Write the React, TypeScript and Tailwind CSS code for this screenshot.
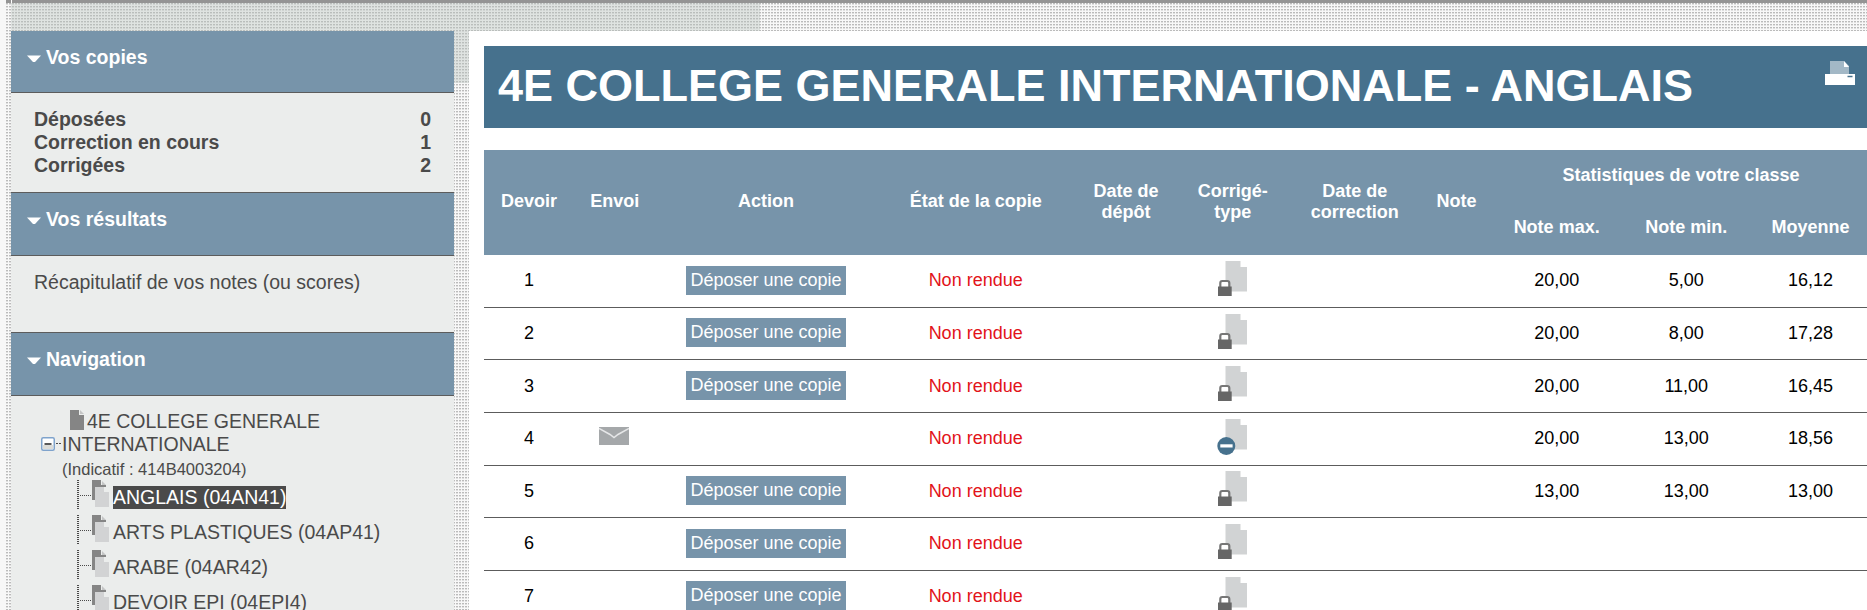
import clsx from "clsx";

type Devoir = {
  num: number;
  envoi?: boolean;
  corrige: "locked" | "forbidden";
  max?: string;
  min?: string;
  moyenne?: string;
};

const devoirs: Devoir[] = [
  { num: 1, corrige: "locked", max: "20,00", min: "5,00", moyenne: "16,12" },
  { num: 2, corrige: "locked", max: "20,00", min: "8,00", moyenne: "17,28" },
  { num: 3, corrige: "locked", max: "20,00", min: "11,00", moyenne: "16,45" },
  { num: 4, envoi: true, corrige: "forbidden", max: "20,00", min: "13,00", moyenne: "18,56" },
  { num: 5, corrige: "locked", max: "13,00", min: "13,00", moyenne: "13,00" },
  { num: 6, corrige: "locked" },
  { num: 7, corrige: "locked" },
];

const copies = [
  { label: "Déposées", count: 0 },
  { label: "Correction en cours", count: 1 },
  { label: "Corrigées", count: 2 },
];

const matieres = ["ANGLAIS (04AN41)", "ARTS PLASTIQUES (04AP41)", "ARABE (04AR42)", "DEVOIR EPI (04EPI4)"];

const columns =
  "grid grid-cols-[90px_81.4px_221.2px_198.2px_102.4px_111px_133px_70.8px_129.4px_129.8px_118.8px] w-[1386px] items-center justify-items-center";

function PanelTitle({ children, className }: { children: string; className?: string }) {
  return (
    <h2
      className={clsx(
        "flex items-start gap-[5px] border-b border-[#5c5c5c] bg-[#7794aa] pl-4 text-[19.5px] leading-[23px] font-bold text-white",
        className
      )}
    >
      <svg width="14" height="8" viewBox="0 0 14 8" className="mt-[9px]">
        <path d="M0 0.5h14L8 7H6z" fill="#fff" />
      </svg>
      {children}
    </h2>
  );
}

function SubjectIcon() {
  return (
    <svg width="32" height="29" viewBox="0 0 32 29" className="shrink-0">
      <path d="M1 0v29" stroke="#4a4a4a" strokeWidth="2" strokeDasharray="1 1" />
      <path d="M3 15.5h11" stroke="#4a4a4a" strokeDasharray="1 1" />
      <path d="M15 0h9v5h5v2H19v13h-4z" fill="#858585" />
      <path d="M18 7h9v5h5v15H18z" fill="#d2d3d4" />
      <path d="M25 1l4 4h-4z" fill="#c4c5c5" />
    </svg>
  );
}

function CorrigeIcon({ type }: { type: Devoir["corrige"] }) {
  return (
    <svg width="30" height="35" viewBox="0 0 30 35" className="mb-[5px] overflow-visible">
      <path d="M7.5 0h15v6h6.5v24.5H7.5z" fill="#d1d3d4" />
      {type === "locked" ? (
        <>
          <path d="M2.3 26v-4q0-2 2-2h5q2 0 2 2v4" fill="#fff" stroke="#777" strokeWidth="2.2" />
          <path d="M0 25.5h13.7V35H0z" fill="#666" />
        </>
      ) : (
        <>
          <circle cx="8.3" cy="27" r="9" fill="#46718d" />
          <path d="M2.3 25.3h12.3v3.2H2.3z" fill="#fff" />
        </>
      )}
    </svg>
  );
}

function Sidebar() {
  return (
    <aside className="w-[443px] shrink-0 bg-[#ebedec] text-[19.5px] leading-[23px] text-[#4a4a4a]">
      <PanelTitle className="h-[62px] pt-[15px]">Vos copies</PanelTitle>
      <ul className="h-[99px] pt-[15px] pr-[23px] pl-[23px] font-bold">
        {copies.map((c) => (
          <li key={c.label} className="flex justify-between">
            <span>{c.label}</span>
            <span>{c.count}</span>
          </li>
        ))}
      </ul>

      <PanelTitle className="h-[64px] border-t pt-[15px]">Vos résultats</PanelTitle>
      <p className="h-[76px] pt-[15px] pl-[23px]">Récapitulatif de vos notes (ou scores)</p>

      <PanelTitle className="h-[64px] border-t pt-[15px]">Navigation</PanelTitle>
      <div className="flex pt-[14px] pl-[30px]">
        <svg width="21" height="16" viewBox="0 0 21 16" className="mt-[27px] shrink-0">
          <rect x="0.75" y="0.75" width="12.5" height="12.5" rx="1.5" fill="#fff" stroke="#7fa3cc" strokeWidth="1.5" />
          <path d="M2 8h10v4H2z" fill="#dcdcd8" />
          <path d="M3.5 7h7" stroke="#222" strokeWidth="1.5" />
          <path d="M15 6.5h6" stroke="#4a4a4a" strokeDasharray="2 1" />
        </svg>
        <div>
          <div className="flex pl-[8px]">
            <svg width="14" height="20" viewBox="0 0 14 20" className="mr-[3px]">
              <path d="M0 0h9v5h5v15H0z" fill="#858585" />
              <path d="M10 0l4 4h-4z" fill="#c4c5c5" />
            </svg>
            4E COLLEGE GENERALE
          </div>
          <div>INTERNATIONALE</div>
          <div className="pt-[3px] text-[16.5px] leading-[20px]">(Indicatif : 414B4003204)</div>
        </div>
      </div>
      <ul className="pt-[1px] pl-[66px]">
        {matieres.map((m, i) => (
          <li key={m} className="flex h-[35px] gap-1">
            <SubjectIcon />
            <span className={clsx("mt-[6px] h-[23px]", i === 0 && "bg-[#4a4a4a] text-white")}>{m}</span>
          </li>
        ))}
      </ul>
    </aside>
  );
}

function DevoirsTable() {
  return (
    <div className="mt-[22px] ml-[15px] text-[18px] leading-[21px]">
      <div className={clsx(columns, "h-[105.2px] bg-[#7794aa] pb-[2px] text-center font-bold text-white")}>
        <span>Devoir</span>
        <span>Envoi</span>
        <span>Action</span>
        <span>État de la copie</span>
        <span className="w-[70px]">Date de dépôt</span>
        <span className="w-[75px]">Corrigé-type</span>
        <span className="w-[90px]">Date de correction</span>
        <span>Note</span>
        <div className="col-span-3 grid grid-cols-[129.4px_129.8px_118.8px] gap-y-[31px]">
          <span className="col-span-3">Statistiques de votre classe</span>
          <span>Note max.</span>
          <span>Note min.</span>
          <span>Moyenne</span>
        </div>
      </div>
      {devoirs.map((d) => (
        <div key={d.num} className={clsx(columns, "h-[52.6px] border-b border-[#5c5c5c] text-black")}>
          <span>{d.num}</span>
          <span>
            {d.envoi && (
              <svg width="30" height="18" viewBox="0 0 30 18" className="mr-[2px] mb-[6px]">
                <path d="M0 0h30v18H0z" fill="#a5a8aa" />
                <path d="M0 1.5l11 6 4 3 4-3 11-6" fill="none" stroke="#e6e7e8" strokeWidth="1.5" />
              </svg>
            )}
          </span>
          <span>
            {!d.envoi && (
              <button className="mb-[1.4px] block h-[29px] w-[160px] bg-[#7794aa] text-white">Déposer une copie</button>
            )}
          </span>
          <span className="text-[#e2131a]">Non rendue</span>
          <span />
          <CorrigeIcon type={d.corrige} />
          <span />
          <span />
          <span>{d.max}</span>
          <span>{d.min}</span>
          <span>{d.moyenne}</span>
        </div>
      ))}
    </div>
  );
}

export default function App() {
  return (
    <div className="flex h-[610px] w-[1867px] overflow-hidden bg-[#f7f7f7] pl-[6px] font-['Liberation_Sans',Arial,sans-serif]">
      <div className="flex flex-1 flex-col bg-[#f8f8f8] bg-[conic-gradient(from_270deg_at_2px_1px,#bbbbbb_90deg,transparent_0),conic-gradient(from_270deg_at_2px_2px,#dfdfdf_90deg,transparent_0)] bg-size-[3px_3px]">
        <div className="flex h-[3px] shrink-0 bg-[#949494] pl-[5px]">
          <div className="w-px bg-white" />
        </div>
        <div className="ml-[5px] h-[28px] w-[749px] shrink-0 bg-[#b9c2bd]/40" />
        <div className="flex flex-1 pl-[5px]">
          <Sidebar />
          <div className="h-[52px] w-[15px] shrink-0 bg-[#b9c2bd]/40" />
          <main className="w-[1398px] shrink-0 bg-white">
            <div className="mt-[15px] ml-[15px] flex h-[82px] justify-between bg-[#46718d] pr-[12px] pl-[14px]">
              <h1 className="pt-[14px] text-[45px] leading-[52px] font-bold whitespace-nowrap text-white">
                4E COLLEGE GENERALE INTERNATIONALE - ANGLAIS
              </h1>
              <svg width="30" height="24" viewBox="0 0 30 24" className="mt-[15px]">
                <path d="M5 0h14l5 5v8H5z" fill="#a3b8c6" />
                <path d="M19 0l5 6h-5z" fill="#fff" />
                <path d="M0 13h30v11H0z" fill="#fff" />
                <path d="M22.5 15.5h5" stroke="#46718d" strokeWidth="1.5" />
              </svg>
            </div>
            <DevoirsTable />
          </main>
        </div>
      </div>
    </div>
  );
}
